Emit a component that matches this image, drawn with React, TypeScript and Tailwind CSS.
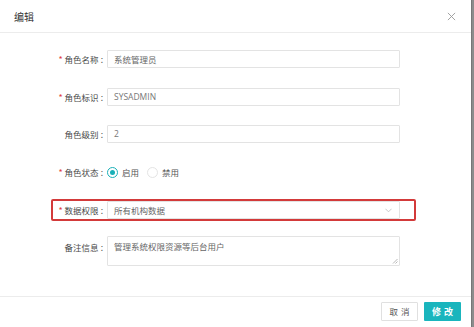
import React from "react";

const font = { fontFamily: '"Noto Sans CJK SC", "Noto Sans", sans-serif' };

function Label({ text, required }: { text: string; required?: boolean }) {
  return (
    <div className="w-[107px] shrink-0 flex items-center justify-end pr-[4px] text-[8.5px] text-[#4a4a4a]">
      {required && <span className="text-[#e04040] mr-[2px] text-[9px] leading-none">*</span>}
      <span>{text}</span>
      <span className="ml-[2px]">:</span>
    </div>
  );
}

export default function App() {
  return (
    <div className="w-[474px] h-[327px] flex bg-white overflow-hidden" style={font}>
      <div className="w-[471px] h-full flex flex-col bg-white">
        <div className="h-[33px] shrink-0 border-b border-[#ececec] flex items-center justify-between pl-[14px] pr-[14px]">
          <span className="text-[10px] text-[#333]">编辑</span>
          <svg width="9" height="9" viewBox="0 0 10 10" className="mr-[1px]">
            <path d="M1 1 L9 9 M9 1 L1 9" stroke="#999" strokeWidth="1" />
          </svg>
        </div>
        <div className="flex-1 flex flex-col pt-[17px]">
          <div className="flex h-[18px]">
            <Label text="角色名称" required />
            <div className="w-[293px] h-[18px] border border-[#e3e3e3] rounded-[1px] flex items-center pl-[6px] text-[8.5px] text-[#666]">系统管理员</div>
          </div>
          <div className="flex h-[18px] mt-[20px]">
            <Label text="角色标识" required />
            <div className="w-[293px] h-[18px] border border-[#e3e3e3] rounded-[1px] flex items-center pl-[6px] text-[8.5px] text-[#777]" style={{ fontFamily: '"Open Sans", sans-serif' }}>SYSADMIN</div>
          </div>
          <div className="flex h-[18px] mt-[19px]">
            <Label text="角色级别" />
            <div className="w-[293px] h-[18px] border border-[#e3e3e3] rounded-[1px] flex items-center pl-[6px] text-[8.5px] text-[#777]" style={{ fontFamily: '"Open Sans", sans-serif' }}>2</div>
          </div>
          <div className="flex h-[18px] mt-[20px] items-center">
            <Label text="角色状态" required />
            <div className="flex items-center text-[8.5px] text-[#555]">
              <span className="w-[11px] h-[11px] rounded-full border border-[#1ab0b8] flex items-center justify-center">
                <span className="w-[5px] h-[5px] rounded-full bg-[#1ab0b8]" />
              </span>
              <span className="ml-[4px]">启用</span>
              <span className="ml-[8px] w-[11px] h-[11px] rounded-full border border-[#e4e4e4]" />
              <span className="ml-[4px]">禁用</span>
            </div>
          </div>
          <div className="flex h-[18px] mt-[20px] relative">
            <div className="absolute left-[51px] top-[-2px] w-[365px] h-[22px] border-2 border-[#d33a3a] rounded-[2px]" />
            <Label text="数据权限" required />
            <div className="w-[293px] h-[18px] border border-[#e3e3e3] rounded-[1px] flex items-center justify-between pl-[6px] pr-[7px] text-[8.5px] text-[#666]">
              <span>所有机构数据</span>
              <svg width="7" height="5" viewBox="0 0 8 5">
                <path d="M0.5 0.5 L4 4 L7.5 0.5" stroke="#bbb" strokeWidth="0.9" fill="none" />
              </svg>
            </div>
          </div>
          <div className="flex mt-[17px]">
            <div className="pt-[5px]">
              <Label text="备注信息" />
            </div>
            <div className="w-[293px] h-[30px] border border-[#e3e3e3] rounded-[1px] pl-[6px] pt-[3px] text-[8.5px] text-[#666] relative">
              管理系统权限资源等后台用户
              <svg width="6" height="6" viewBox="0 0 6 6" className="absolute right-[1px] bottom-[1px]">
                <path d="M5.5 1 L1 5.5 M5.5 3.5 L3.5 5.5" stroke="#999" strokeWidth="0.7" />
              </svg>
            </div>
          </div>
        </div>
        <div className="h-[31px] shrink-0 border-t border-[#ececec] flex items-start justify-end pt-[5px] pr-[10px]">
          <div className="w-[37px] h-[19px] border border-[#e0e0e0] rounded-[1px] flex items-center justify-center text-[8.5px] text-[#555] tracking-[3px] pl-[3px]">取消</div>
          <div className="ml-[6px] w-[37px] h-[19px] rounded-[1px] bg-[#1ab5bd] flex items-center justify-center text-[9px] text-white font-bold tracking-[3px] pl-[3px]">修改</div>
        </div>
      </div>
      <div className="flex-1 h-full bg-[#8c8c8c] border-l border-[#777]" />
    </div>
  );
}
